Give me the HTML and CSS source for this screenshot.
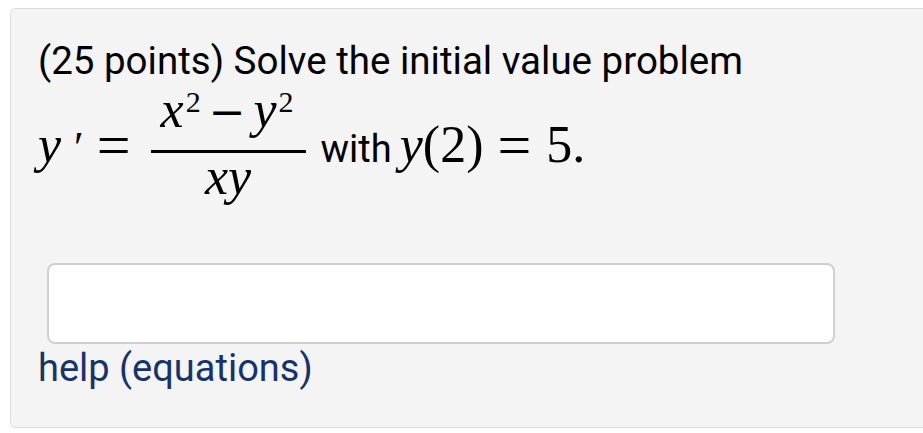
FILE: index.html
```html
<!DOCTYPE html>
<html lang="en">
<head>
<meta charset="utf-8">
<title>Problem</title>
<link rel="stylesheet" href="styles.css">
</head>
<body>
<div class="panel">
  <p class="title">(25 points) Solve the initial value problem</p>
  <p class="eq"><span class="m"><i>y</i><span class="prime">′</span></span><span class="m eqs rel">=</span><span class="frac"><span class="num"><i>x</i><sup>2</sup><span class="op minus">−</span><i>y</i><sup>2</sup></span><span class="bar"></span><span class="den"><i>x</i><i>y</i></span></span><span class="word">with</span><span class="m"><i>y</i>(2)<span class="eqs rel2">=</span>5.</span></p>
  <div class="answer"></div>
  <a class="help" href="#">help (equations)</a>
</div>
</body>
</html>
```
FILE: styles.css
```css
html, body {
  margin: 0;
  padding: 0;
  background: #ffffff;
  overflow: hidden;
}
body {
  font-family: Roboto, "Liberation Sans", sans-serif;
  color: #000;
}
.panel {
  margin: 8px -20px 0 10px;
  box-sizing: border-box;
  height: 420px;
  background: #f4f4f4;
  border: 1px solid #dcdcdc;
  border-radius: 5px;
  padding: 30px 0 0 27px;
}
.title {
  margin: 0;
  font-size: 38.5px;
  line-height: 44px;
}
.eq {
  margin: 3px 0 0 0;
  font-size: 38px;
  line-height: 40px;
  white-space: nowrap;
}
.m {
  font-family: "Liberation Serif", "DejaVu Serif", serif;
  font-size: 52px;
}
.m i, .frac i {
  font-style: italic;
}
.op {
  font-family: "DejaVu Serif", "Liberation Serif", serif;
  font-size: 44px;
  font-weight: 300;
}
.eqs {
  font-family: "Liberation Serif", "DejaVu Serif", serif;
  font-size: 60px;
  display: inline-block;
  vertical-align: -3px;
  line-height: 40px;
}
.prime {
  font-size: 44px;
  margin-left: 13px;
}
.rel {
  margin: 0 20px 0 13px;
}
.frac {
  display: inline-block;
  vertical-align: -32px;
  font-family: "Liberation Serif", "DejaVu Serif", serif;
  font-size: 52px;
  line-height: 48px;
  text-align: center;
  width: 155px;
}
.num, .den {
  display: block;
  height: 48px;
}
.num {
  padding-right: 2px;
}
.frac sup {
  font-size: 30px;
  line-height: 0;
  vertical-align: 15px;
  font-style: normal;
  margin-left: 2px;
}
.minus {
  margin: 0 8px;
}
.bar {
  display: block;
  height: 3px;
  background: #000;
  margin-top: 16px;
}
.word {
  margin-left: 15px;
  margin-right: 8px;
}
.rel2 {
  margin: 0 15px 0 14px;
}
.answer {
  margin: 62px 0 0 9px;
  width: 788px;
  height: 81px;
  box-sizing: border-box;
  background: #fff;
  border: 2px solid #cfcfcf;
  border-radius: 8px;
}
.help {
  display: block;
  width: max-content;
  margin-top: 2px;
  font-size: 38px;
  line-height: 44px;
  color: #17346a;
  text-decoration: none;
}
```
